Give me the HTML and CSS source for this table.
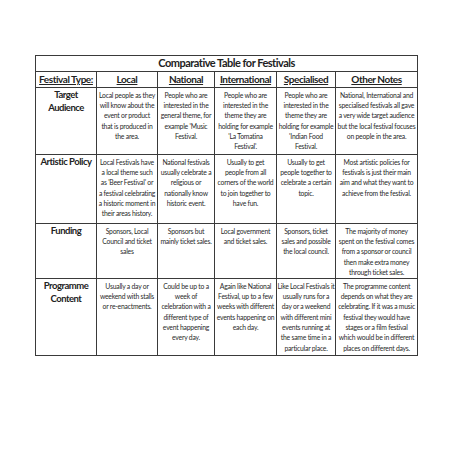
FILE: index.html
```html
<!DOCTYPE html>
<html>
<head>
<meta charset="utf-8">
<link rel="stylesheet" href="styles.css">
</head>
<body>
<table class="cmp">
  <colgroup>
    <col class="c1"><col class="c2"><col class="c3"><col class="c4"><col class="c5"><col class="c6">
  </colgroup>
  <tr class="r-title"><th colspan="6" class="title">Comparative Table for Festivals</th></tr>
  <tr class="r-head">
    <th class="hd">Festival Type:</th>
    <th class="hd">Local</th>
    <th class="hd">National</th>
    <th class="hd">International</th>
    <th class="hd">Specialised</th>
    <th class="hd">Other Notes</th>
  </tr>
  <tr class="r1">
    <th class="lbl">Target<br>Audience</th>
    <td>Local people as they<br>will know about the<br>event or product<br>that is produced in<br>the area.</td>
    <td>People who are<br>interested in the<br>general theme, for<br>example 'Music<br>Festival.</td>
    <td>People who are<br>interested in the<br>theme they are<br>holding for example<br>'La Tomatina<br>Festival'.</td>
    <td>People who are<br>interested in the<br>theme they are<br>holding for example<br>'Indian Food<br>Festival.</td>
    <td>National, International and<br>specialised festivals all gave<br>a very wide target audience<br>but the local festival focuses<br>on people in the area.</td>
  </tr>
  <tr class="r2">
    <th class="lbl">Artistic Policy</th>
    <td>Local Festivals have<br>a local theme such<br>as 'Beer Festival' or<br>a festival celebrating<br>a historic moment in<br>their areas history.</td>
    <td>National festivals<br>usually celebrate a<br>religious or<br>nationally know<br>historic event.</td>
    <td>Usually to get<br>people from all<br>corners of the world<br>to join together to<br>have fun.</td>
    <td>Usually to get<br>people together to<br>celebrate a certain<br>topic.</td>
    <td>Most artistic policies for<br>festivals is just their main<br>aim and what they want to<br>achieve from the festival.</td>
  </tr>
  <tr class="r3">
    <th class="lbl">Funding</th>
    <td>Sponsors, Local<br>Council and ticket<br>sales</td>
    <td>Sponsors but<br>mainly ticket sales.</td>
    <td>Local government<br>and ticket sales.</td>
    <td>Sponsors, ticket<br>sales and possible<br>the local council.</td>
    <td>The majority of money<br>spent on the festival comes<br>from a sponsor or council<br>then make extra money<br>through ticket sales.</td>
  </tr>
  <tr class="r4">
    <th class="lbl">Programme<br>Content</th>
    <td>Usually a day or<br>weekend with stalls<br>or re-enactments.</td>
    <td>Could be up to a<br>week of<br>celebration with a<br>different type of<br>event happening<br>every day.</td>
    <td>Again like National<br>Festival, up to a few<br>weeks with different<br>events happening on<br>each day.</td>
    <td>Like Local Festivals it<br>usually runs for a<br>day or a weekend<br>with different mini<br>events running at<br>the same time in a<br>particular place.</td>
    <td>The programme content<br>depends on what they are<br>celebrating. If it was a music<br>festival they would have<br>stages or a film festival<br>which would be in different<br>places on different days.</td>
  </tr>
</table>
</body>
</html>
```
FILE: styles.css
```css
html, body {
  margin: 0;
  padding: 0;
  background: #ffffff;
}
body {
  padding: 55px 0 0 35px;
  font-family: Lato, "Liberation Sans", sans-serif;
  color: #222;
}
.cmp {
  border-collapse: collapse;
  table-layout: fixed;
  width: 382px;
}
.c1 { width: 61px; }
.c2 { width: 61px; }
.c3 { width: 57px; }
.c4 { width: 62px; }
.c5 { width: 59px; }
.c6 { width: 82px; }
.cmp th, .cmp td {
  border: 1px solid #3a3a3a;
  padding: 0;
  text-align: center;
  vertical-align: top;
  overflow: hidden;
  white-space: nowrap;
}
.r-title { height: 16px; }
.r-head { height: 16px; }
.r1 { height: 67px; }
.r2 { height: 69px; }
.r3 { height: 55px; }
.r4 { height: 77px; }
.title {
  font-size: 11px;
  font-weight: bold;
  letter-spacing: -0.5px;
  line-height: 14px;
  vertical-align: middle;
}
.hd {
  font-size: 10px;
  font-weight: bold;
  letter-spacing: -0.45px;
  line-height: 14px;
  text-decoration: underline;
  vertical-align: middle;
}
.lbl {
  font-size: 9.5px;
  font-weight: bold;
  letter-spacing: -0.5px;
  line-height: 13px;
  padding-top: 2px;
}
.cmp td {
  font-size: 6.8px;
  letter-spacing: -0.22px;
  line-height: 10.35px;
  padding-top: 1.5px;
  color: #2a2a2a;
}
```
